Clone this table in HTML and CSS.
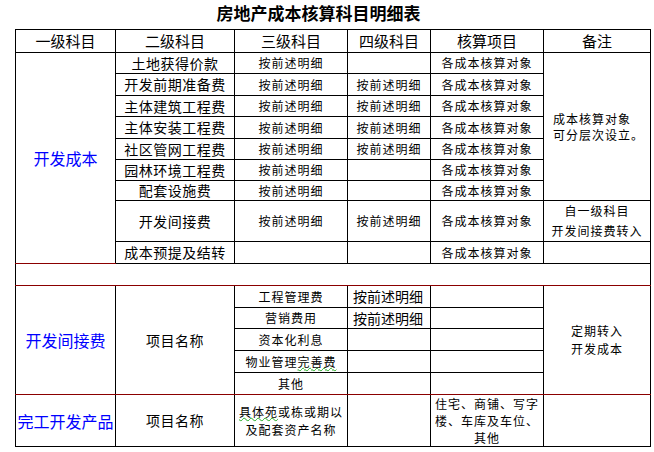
FILE: index.html
```html
<!DOCTYPE html>
<html lang="zh-CN">
<head>
<meta charset="utf-8">
<title>房地产成本核算科目明细表</title>
<link rel="stylesheet" href="styles.css">
</head>
<body>
<div class="page">
  <div class="title">房地产成本核算科目明细表</div>
  <table class="sheet">
    <colgroup>
      <col class="c1"><col class="c2"><col class="c3"><col class="c4"><col class="c5"><col class="c6">
    </colgroup>
    <tr class="h-head">
      <th>一级科目</th><th>二级科目</th><th>三级科目</th><th>四级科目</th><th>核算项目</th><th>备注</th>
    </tr>
    <tr class="h21">
      <td rowspan="9" class="lv1 redb">开发成本</td>
      <td class="lv2">土地获得价款</td>
      <td class="sm">按前述明细</td>
      <td class="sm"></td>
      <td class="sm">各成本核算对象</td>
      <td rowspan="7" class="sm note">成本核算对象<br>可分层次设立。</td>
    </tr>
    <tr class="h22">
      <td class="lv2">开发前期准备费</td><td class="sm">按前述明细</td><td class="sm">按前述明细</td><td class="sm">各成本核算对象</td>
    </tr>
    <tr class="h21">
      <td class="lv2">主体建筑工程费</td><td class="sm">按前述明细</td><td class="sm">按前述明细</td><td class="sm">各成本核算对象</td>
    </tr>
    <tr class="h22">
      <td class="lv2">主体安装工程费</td><td class="sm">按前述明细</td><td class="sm">按前述明细</td><td class="sm">各成本核算对象</td>
    </tr>
    <tr class="h21">
      <td class="lv2">社区管网工程费</td><td class="sm">按前述明细</td><td class="sm">按前述明细</td><td class="sm">各成本核算对象</td>
    </tr>
    <tr class="h21">
      <td class="lv2">园林环境工程费</td><td class="sm">按前述明细</td><td class="sm"></td><td class="sm">各成本核算对象</td>
    </tr>
    <tr class="h20">
      <td class="lv2">配套设施费</td><td class="sm">按前述明细</td><td class="sm"></td><td class="sm">各成本核算对象</td>
    </tr>
    <tr class="h41">
      <td class="lv2">开发间接费</td><td class="sm">按前述明细</td><td class="sm">按前述明细</td><td class="sm">各成本核算对象</td>
      <td class="sm two">自一级科目<br>开发间接费转入</td>
    </tr>
    <tr class="h22">
      <td class="lv2">成本预提及结转</td><td class="sm"></td><td class="sm"></td><td class="sm">各成本核算对象</td><td class="sm"></td>
    </tr>
    <tr class="h22">
      <td colspan="6" class="redb"></td>
    </tr>
    <tr class="h22">
      <td rowspan="5" class="lv1 redb">开发间接费</td>
      <td rowspan="5" class="lv2 redb">项目名称</td>
      <td class="sm">工程管理费</td>
      <td class="lv4">按前述明细</td>
      <td></td>
      <td rowspan="5" class="sm two2 redb">定期转入<br>开发成本</td>
    </tr>
    <tr class="h21">
      <td class="sm">营销费用</td><td class="lv4">按前述明细</td><td></td>
    </tr>
    <tr class="h22">
      <td class="sm">资本化利息</td><td></td><td></td>
    </tr>
    <tr class="h22">
      <td class="sm">物业管理<span class="spell">完善费</span></td><td></td><td></td>
    </tr>
    <tr class="h22">
      <td class="sm redb">其他</td><td class="redb"></td><td class="redb"></td>
    </tr>
    <tr class="h51">
      <td class="lv1">完工开发产品</td>
      <td class="lv2">项目名称</td>
      <td class="sm two2"><span class="spell">具体苑</span>或栋或期以<br>及配套资产名称</td>
      <td></td>
      <td class="sm three">住宅、商铺、写字<br>楼、车库及车位、<br>其他</td>
      <td></td>
    </tr>
  </table>
</div>
</body>
</html>
```
FILE: styles.css
```css
html, body {
  margin: 0;
  padding: 0;
  background: #ffffff;
}

body {
  font-family: "Noto Sans CJK SC", "Noto Sans", sans-serif;
  color: #000000;
}

.page {
  padding: 0 0 0 15px;
}

.title {
  width: 607px;
  height: 26px;
  line-height: 26px;
  text-align: center;
  font-size: 17px;
  font-weight: bold;
  margin-bottom: 3px;
}

.sheet {
  border-collapse: collapse;
  table-layout: fixed;
  width: 635px;
  border-top: 1px solid #000;
  border-left: 1px solid #000;
}

.c1 { width: 100px; }
.c2 { width: 119px; }
.c3 { width: 113px; }
.c4 { width: 83px; }
.c5 { width: 113px; }
.c6 { width: 107px; }

.sheet th,
.sheet td {
  padding: 0;
  border: none;
  border-right: 1px solid #000;
  border-bottom: 1px solid #000;
  text-align: center;
  vertical-align: middle;
  white-space: nowrap;
  overflow: hidden;
}

.sheet th {
  font-weight: normal;
  font-size: 15px;
  line-height: 18px;
}

.sheet td.redb {
  border-bottom-color: #8b0000;
}

.h-head { height: 23px; }
.h20 { height: 20px; }
.h21 { height: 21px; }
.h22 { height: 22px; }
.h41 { height: 41px; }
.h51 { height: 51px; }

.lv1 {
  color: #0000ff;
  font-size: 16px;
  line-height: 18px;
}

.lv2 {
  font-size: 14px;
  letter-spacing: 0.5px;
  line-height: 17px;
}

.sm {
  font-size: 12px;
  letter-spacing: 1px;
  line-height: 16px;
}

.lv4 {
  font-size: 14px;
  line-height: 17px;
  text-align: left !important;
  padding-left: 5px !important;
}

.note {
  text-align: left !important;
  padding-left: 9px !important;
  line-height: 16px;
}

.two {
  line-height: 20px;
}

.two2 {
  line-height: 18px;
}

.three {
  line-height: 17px;
}

.spell {
  text-decoration-line: underline;
  text-decoration-style: wavy;
  text-decoration-color: #22aa22;
  text-decoration-thickness: 1px;
  text-underline-offset: 0px;
  text-underline-position: auto;
}
```
